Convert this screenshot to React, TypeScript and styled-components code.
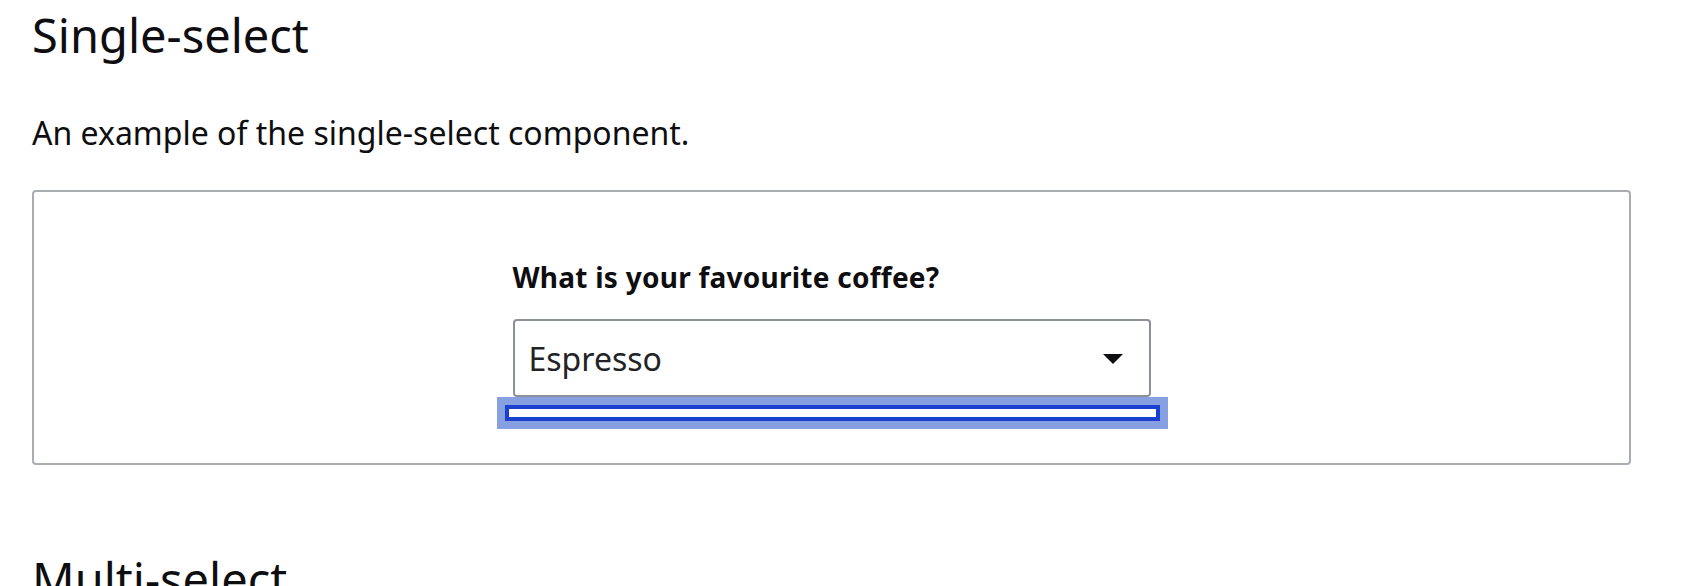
import styled, { createGlobalStyle } from "styled-components";

const GlobalStyle = createGlobalStyle`
  body {
    margin: 0;
    background: #ffffff;
    font-family: "Noto Sans", "Open Sans", sans-serif;
    color: #0e0e10;
  }
`;

export const Page = styled.main`
  padding: 5px 53px 0 32px;
`;

export const SectionTitle = styled.h2`
  margin: 0;
  font-size: 47px;
  line-height: 60px;
  font-weight: 400;
`;

export const Intro = styled.p`
  margin: 44px 0 33px;
  font-size: 32px;
  line-height: 48px;
`;

export const ExampleBox = styled.div`
  border: 2px solid #a9adb2;
  border-radius: 4px;
  padding: 68px 0 42px;
  display: flex;
  justify-content: center;
  margin-bottom: 84px;
`;

export const Field = styled.div`
  width: 638px;
  display: flex;
  flex-direction: column;
`;

export const FieldLabel = styled.label`
  font-size: 28px;
  line-height: 35px;
  font-weight: 700;
  letter-spacing: 0.25px;
  margin-bottom: 24px;
`;

export const SelectButton = styled.div`
  box-sizing: border-box;
  height: 78px;
  border: 2px solid #8c9099;
  border-radius: 4px;
  padding: 13px 26px 12px 14px;
  display: flex;
  align-items: center;
  justify-content: space-between;
  font-size: 32px;
  line-height: 48px;
  color: #222326;
`;

export const Listbox = styled.ul`
  box-sizing: border-box;
  margin: 8px 0 0 -8px;
  padding: 0;
  width: 655px;
  height: 16px;
  border: 4px solid #1b3fcf;
  outline: 8px solid #87a0e2;
  background: #ffffff;
  list-style: none;
`;

const Caret = () => (
  <svg width="20" height="10" viewBox="0 0 20 10" aria-hidden="true">
    <polygon points="0,0 20,0 10,10" fill="#0e0e10" />
  </svg>
);

export default function App() {
  return (
    <>
      <GlobalStyle />
      <Page>
        <SectionTitle>Single-select</SectionTitle>
        <Intro>An example of the single-select component.</Intro>
        <ExampleBox>
          <Field>
            <FieldLabel>What is your favourite coffee?</FieldLabel>
            <SelectButton>
              <span>Espresso</span>
              <Caret />
            </SelectButton>
            <Listbox role="listbox" />
          </Field>
        </ExampleBox>
        <SectionTitle>Multi-select</SectionTitle>
      </Page>
    </>
  );
}
